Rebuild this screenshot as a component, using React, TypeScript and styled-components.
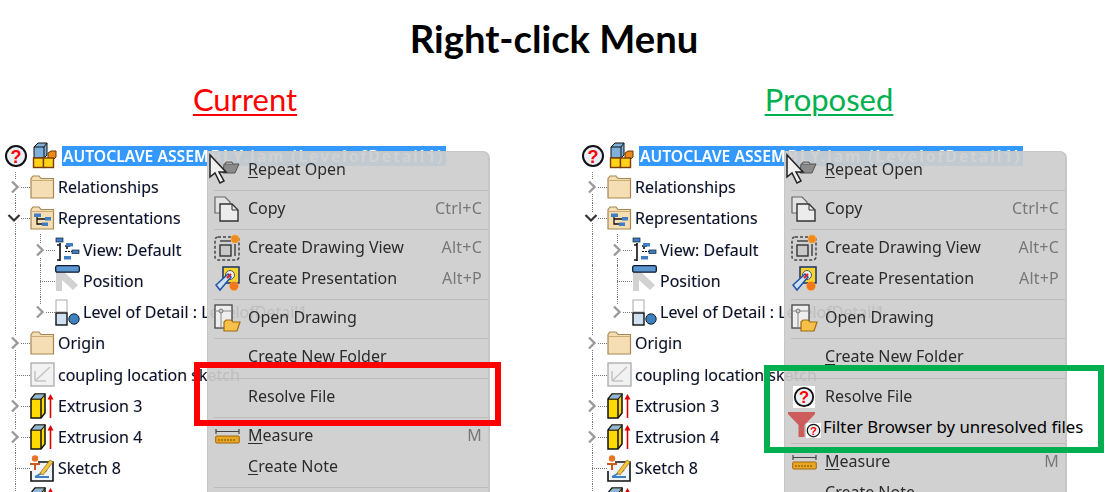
import React from "react";
import styled, { createGlobalStyle } from "styled-components";

const Global = createGlobalStyle`
  html, body { margin: 0; padding: 0; background: #fff; }
  #root { width: 1110px; height: 492px; }
`;

const Page = styled.div`
  width: 1110px;
  height: 492px;
  overflow: hidden;
  background: #fff;
  font-family: "Noto Sans", "Liberation Sans", sans-serif;
`;
const Title = styled.h1`
  margin: 0;
  height: 76px;
  text-align: center;
  padding-right: 2px;
  font: 700 38.2px/76px Lato, "Liberation Sans", sans-serif;
  color: #000;
`;
const Columns = styled.div`
  display: grid;
  grid-template-columns: 577px 533px;
`;
const Panel = styled.section`
  min-width: 0;
`;
const Heading = styled.h2<{ $color: string; $width: number }>`
  margin: 0 0 18px;
  width: ${(p) => p.$width}px;
  text-align: center;
  font: 400 31px/46px Lato, "Liberation Sans", sans-serif;
  color: ${(p) => p.$color};
  text-decoration: underline;
  text-decoration-thickness: 2px;
  text-underline-offset: 3px;
`;
const Snapshot = styled.div`
  position: relative;
  height: 352px;
`;
const Tree = styled.div`
  display: flex;
  flex-direction: column;
  width: 520px;
`;
const RootRow = styled.div`
  display: flex;
  align-items: center;
  height: 31.5px;
  padding-left: 4px;
`;
const Selected = styled.span`
  margin-left: 6px;
  background: #3399ff;
  color: #fff;
  font-weight: 600;
  font-size: 15.7px;
  line-height: 20px;
  padding: 0 1px;
  white-space: nowrap;
  filter: blur(0.35px);
`;
const SelectedTail = styled.span`
  font-weight: 700;
  letter-spacing: 1.9px;
`;
const TreeRow = styled.div`
  display: flex;
  align-items: center;
  height: 31.25px;
`;
const Guide = styled.span`
  flex: none;
  width: 25px;
  align-self: stretch;
  position: relative;
  &::before {
    content: "";
    position: absolute;
    left: 15px;
    top: 0;
    bottom: 0;
    border-left: 1px dotted #777;
  }
`;
const Twist = styled.span<{ $short?: boolean }>`
  flex: none;
  width: 30px;
  align-self: stretch;
  position: relative;
  display: flex;
  align-items: center;
  &::before {
    content: "";
    position: absolute;
    left: 15px;
    top: 0;
    bottom: ${(p) => (p.$short ? "50%" : "0")};
    border-left: 1px dotted #777;
  }
  &::after {
    content: "";
    position: absolute;
    left: 15px;
    width: 15px;
    top: 50%;
    border-top: 1px dotted #777;
  }
  svg {
    position: relative;
    z-index: 1;
    background: #fff;
  }
`;
const TreeIcon = styled.span`
  flex: none;
  width: 24px;
  margin-right: 4px;
  display: flex;
  justify-content: center;
  svg { display: block; overflow: visible; }
`;
const RootIcon = styled(TreeIcon)`
  margin-left: 4px;
  margin-right: 0;
`;
const Label = styled.span`
  font-size: 16px;
  color: #0a1228;
  white-space: nowrap;
  text-shadow: 0.6px 0 rgba(255, 150, 0, 0.25), -0.6px 0 rgba(0, 90, 255, 0.25);
  filter: blur(0.3px);
`;
const Menu = styled.div`
  position: absolute;
  left: 207px;
  top: 11px;
  width: 283px;
  height: 360px;
  box-sizing: border-box;
  padding-top: 2px;
  background: rgba(205, 205, 205, 0.92);
  border: 1px solid #c6c6c6;
  border-right-width: 2px;
  border-radius: 0 7px 0 0;
  display: flex;
  flex-direction: column;
`;
const Row = styled.div<{ $h: number }>`
  flex: none;
  height: ${(p) => p.$h}px;
  display: flex;
  align-items: center;
  position: relative;
  padding-left: 40px;
  padding-right: 6px;
  font-size: 16px;
  color: #2c2c2c;
  white-space: nowrap;
`;
const RowLabel = styled.span<{ $sharp?: boolean }>`
  flex: 1;
  margin-left: ${(p) => (p.$sharp ? "-2px" : "0")};
  margin-top: ${(p) => (p.$sharp ? "0" : "-2px")};
  font-size: ${(p) => (p.$sharp ? "16.8px" : "inherit")};
  color: ${(p) => (p.$sharp ? "#000" : "inherit")};
  filter: ${(p) => (p.$sharp ? "none" : "blur(0.35px)")};
  u { text-underline-offset: 2px; }
`;
const Shortcut = styled.span`
  color: #777;
  margin-top: -2px;
  letter-spacing: 0.2px;
  filter: blur(0.35px);
`;
const MenuIcon = styled.span`
  position: absolute;
  left: 5px;
  top: 50%;
  width: 28px;
  height: 28px;
  transform: translateY(-50%);
  display: flex;
  align-items: center;
  justify-content: center;
  svg { display: block; overflow: visible; }
`;
const CursorIcon = styled.span`
  display: block;
  margin-left: -5px;
  margin-top: -1px;
`;
const Sep = styled.div<{ $before?: number }>`
  flex: none;
  height: 1px;
  margin: ${(p) => p.$before ?? 5}px 0 2px 6px;
  background: #bcbcbc;
`;
const Callout = styled.div<{ $color: string; $l: number; $t: number; $w: number; $h: number }>`
  position: absolute;
  left: ${(p) => p.$l}px;
  top: ${(p) => p.$t}px;
  width: ${(p) => p.$w}px;
  height: ${(p) => p.$h}px;
  box-sizing: border-box;
  border: 6px solid ${(p) => p.$color};
`;
const IconStack = styled.span`
  position: relative;
  width: 27px;
  height: 25px;
  display: block;
  margin: -3px 0 0 -5px;
`;
const HelpOverlay = styled.span`
  position: absolute;
  left: 18px;
  top: 11px;
  display: flex;
`;
const ChevronWrap = styled.span<{ $open?: boolean }>`
  display: flex;
  margin-left: ${(p) => (p.$open ? "7px" : "10px")};
`;

/* ---------- icons ---------- */
const Help = ({ s = 24, paper }: { s?: number; paper?: boolean }) => (
  <svg width={s} height={s} viewBox="0 0 24 24">
    {paper && <rect width="24" height="24" fill="#fff" />}
    <circle cx="12" cy="12" r="10" fill="#e9eff7" stroke="#111" strokeWidth="2" />
    <text x="12" y="18.5" textAnchor="middle" fontFamily="Liberation Sans" fontWeight="700" fontSize="18" fill="#f00">?</text>
  </svg>
);
const Assembly = () => (
  <svg width="25" height="27" viewBox="0 0 25 27">
    <path d="M2 5 6 1h9v12l-3 3H2z" fill="#7fb0dc" stroke="#111" />
    <path d="M2 5h10v11M12 5l3-4" fill="none" stroke="#111" />
    <path d="M16 11l3-2h5v6l-3 3h-5z" fill="#e88a1c" stroke="#6b3300" />
    <rect x="1.500" y="16" width="10" height="9.500" fill="#ffd21a" stroke="#7a3c00" strokeWidth="1.4" />
    <rect x="11.500" y="16" width="10" height="9.500" fill="#ffd21a" stroke="#7a3c00" strokeWidth="1.4" />
  </svg>
);
const Folder = ({ children }: { children?: React.ReactNode }) => (
  <svg width="25" height="24" viewBox="0 0 25 24">
    <path d="M1 3.500 3 1h6l2 2.500h12.500V23H1z" fill="#f6deb4" stroke="#a68752" strokeWidth="1.2" />
    <path d="M1.500 5.500h22" stroke="#c9ab78" />
    {children}
  </svg>
);
const RepFolder = () => (
  <Folder>
    <path d="M7 11v7h5M7 13h8" stroke="#111" fill="none" strokeWidth="1.3" />
    <rect x="4" y="7.500" width="7" height="3.500" fill="#3d7fc0" />
    <rect x="15" y="11" width="6" height="3.500" fill="#3d7fc0" />
    <rect x="12" y="16.500" width="6" height="3.500" fill="#3d7fc0" />
  </Folder>
);
const ViewIco = () => (
  <svg width="25" height="26" viewBox="0 0 25 26">
    <path d="M5 6v18M5 8H2M5 23H2M10 9h5M12 9v3" stroke="#111" strokeWidth="1.6" fill="none" />
    <rect x="1" y="1" width="7" height="4" fill="#3d7fc0" stroke="#123" strokeWidth=".7" />
    <rect x="11" y="6" width="7" height="3.500" fill="#3d7fc0" />
    <rect x="17" y="13" width="7" height="3.500" fill="#3d7fc0" stroke="#123" strokeWidth=".7" />
    <rect x="9" y="19" width="7" height="3.500" fill="#3d7fc0" />
    <path d="M10 14.500h7" stroke="#111" strokeDasharray="2 1" />
  </svg>
);
const PositionIco = () => (
  <svg width="25" height="31" viewBox="0 0 25 31">
    <path d="M1 7v19h6V15l11 10 5-5L9 7z" fill="#d2d2d2" />
    <rect x=".7" y=".7" width="23.600" height="6.500" rx="1.500" fill="#5b97d2" stroke="#0c1a2c" strokeWidth="1.3" />
  </svg>
);
const Lod = () => (
  <svg width="25" height="27" viewBox="0 0 25 27">
    <rect x="1" y="1" width="11" height="12" fill="#fff" stroke="#aaa" />
    <rect x="1" y="14" width="11" height="12" fill="#cfe0f0" stroke="#111" strokeWidth="1.4" />
    <circle cx="19" cy="20" r="5.200" fill="#3f80bf" stroke="#123" />
  </svg>
);
const SketchGray = () => (
  <svg width="25" height="25" viewBox="0 0 25 25">
    <rect x="1" y="1" width="23" height="23" fill="#f2f2f2" stroke="#aaa" strokeWidth="1.3" />
    <path d="M5 19 20 5M5 19V9M5 19h11" stroke="#c4c4c4" strokeWidth="1.5" fill="none" />
  </svg>
);
const Extrusion = () => (
  <svg width="24" height="26" viewBox="0 0 24 26">
    <path d="M1 6 5 1h10v19l-4 5H1z" fill="#ffd900" stroke="#111" strokeWidth="1.500" />
    <path d="M11 6v19M1 6h10l4-5" stroke="#111" strokeWidth="1.500" fill="none" />
    <path d="M2 5.500 5.500 1.500H14.500L11 5.500z" fill="#8fb6d8" />
    <path d="M20.500 25V3" stroke="#e00000" strokeWidth="1.600" />
    <path d="M17.500 6.500 20.500 1l3 5.500z" fill="#e00000" />
  </svg>
);
const SketchEight = () => (
  <svg width="26" height="27" viewBox="0 0 26 27">
    <path d="M9 7h15v19H2V16" fill="#eef4fa" stroke="#111" strokeWidth="1.600" />
    <path d="M6 22 18 15M6 22h14" stroke="#3d7fc0" strokeWidth="2" fill="none" />
    <path d="M11 18 21 5l3 2-10 13z" fill="#f5c542" stroke="#9a6a00" strokeWidth=".7" />
    <circle cx="6" cy="3.500" r="3.200" fill="#e8742a" />
    <path d="M1 9h10M6 9v6" stroke="#d0581a" strokeWidth="2" />
  </svg>
);
const Chevron = ({ open }: { open?: boolean }) => (
  <ChevronWrap $open={open}>
    {open ? (
      <svg width="14" height="10" viewBox="0 0 14 10">
        <path d="M1.500 2 7 7.500 12.500 2" fill="none" stroke="#333" strokeWidth="2.200" />
      </svg>
    ) : (
      <svg width="10" height="14" viewBox="0 0 10 14">
        <path d="M2 1.500 7.500 7 2 12.500" fill="none" stroke="#9a9a9a" strokeWidth="2.400" />
      </svg>
    )}
  </ChevronWrap>
);
const RepeatIco = () => (
  <CursorIcon>
    <svg width="31" height="31" viewBox="0 0 31 31">
      <path d="M15 10h15l-4 9H14z" fill="#8b8b8b" stroke="#555" />
      <path d="M16 10l1-2h6l1 2" fill="#aaa" stroke="#555" />
      <path d="M1 1v22l5-4 5 10 4-2-5-9h7z" fill="#f0f0f0" stroke="#222" strokeWidth="1.500" />
    </svg>
  </CursorIcon>
);
const CopyIco = () => (
  <svg width="26" height="26" viewBox="0 0 26 26">
    <path d="M1 1h10l5 5v11H1z" fill="#e3e3e3" stroke="#666" strokeWidth="1.200" />
    <path d="M6 8h12l6 6v11H6z" fill="#ececec" stroke="#333" strokeWidth="1.400" />
    <path d="M18 8v6h6" fill="none" stroke="#333" />
  </svg>
);
const DrawingIco = () => (
  <svg width="26" height="27" viewBox="0 0 26 27">
    <rect x="1" y="3" width="24" height="23" rx="3" fill="none" stroke="#444" strokeWidth="1.500" strokeDasharray="3 2" />
    <path d="M6 7h11" stroke="#444" strokeWidth="1.500" />
    <rect x="6" y="11" width="11" height="11" fill="#c8c8c8" stroke="#333" strokeWidth="1.400" />
    <path d="M21 10v12" stroke="#444" strokeWidth="1.500" />
    <circle cx="21" cy="5" r="4" fill="#f08a1c" stroke="#ffb23a" strokeDasharray="1.500 1" />
  </svg>
);
const PresentIco = () => (
  <svg width="26" height="26" viewBox="0 0 26 26">
    <rect x="9" y="1" width="16" height="16" fill="#f5d630" stroke="#1b2f66" strokeWidth="1.500" />
    <circle cx="16" cy="9" r="4.500" fill="#eee" stroke="#555" />
    <path d="M2 19 14 8l3 3L6 24z" fill="#cfe0f0" stroke="#1f55a8" strokeWidth="1.500" />
    <path d="M13 12l4-4" stroke="#e02020" strokeWidth="2" />
    <circle cx="20" cy="20" r="4.500" fill="#f0781c" stroke="#ffb23a" strokeDasharray="1.500 1" />
  </svg>
);
const OpenDrawIco = () => (
  <svg width="27" height="28" viewBox="0 0 27 28">
    <rect x="1" y="1" width="17" height="23" fill="#eee" stroke="#444" strokeWidth="1.300" />
    <path d="M1 7h17M7 7v17" stroke="#888" />
    <circle cx="7" cy="7" r="2" fill="#ccc" stroke="#777" />
    <path d="M10 27V18l2-2h5l2 2h7l-3 9z" fill="#f6c04a" stroke="#a06c10" strokeWidth="1.200" />
  </svg>
);
const MeasureIco = () => (
  <svg width="25" height="16" viewBox="0 0 25 16">
    <path d="M1 1v5M24 1v5M1 3.500h23" stroke="#444" strokeWidth="1.200" fill="none" />
    <rect x=".7" y="8" width="23.600" height="7" rx="1" fill="#e7a723" stroke="#a5660a" />
    <path d="M4 11v2M7 11v2M10 11v2M13 11v2M16 11v2M19 11v2" stroke="#7a4a00" />
  </svg>
);
const FilterIco = () => (
  <svg width="27" height="25" viewBox="0 0 27 25">
    <path d="M0 0h27v2L16.500 13v12h-6V13L0 2z" fill="#cd5c5c" />
  </svg>
);

/* ---------- data ---------- */
type Node = { level: 0 | 1; twist?: "open" | "closed"; last?: boolean; icon: React.ReactNode; label: string };
const nodes: Node[] = [
  { level: 0, twist: "closed", icon: <Folder />, label: "Relationships" },
  { level: 0, twist: "open", icon: <RepFolder />, label: "Representations" },
  { level: 1, twist: "closed", icon: <ViewIco />, label: "View: Default" },
  { level: 1, icon: <PositionIco />, label: "Position" },
  { level: 1, twist: "closed", last: true, icon: <Lod />, label: "Level of Detail : LevelofDetail1" },
  { level: 0, twist: "closed", icon: <Folder />, label: "Origin" },
  { level: 0, icon: <SketchGray />, label: "coupling location sketch" },
  { level: 0, twist: "closed", icon: <Extrusion />, label: "Extrusion 3" },
  { level: 0, twist: "closed", icon: <Extrusion />, label: "Extrusion 4" },
  { level: 0, icon: <SketchEight />, label: "Sketch 8" },
  { level: 0, icon: <Extrusion />, label: "" },
];

const BrowserTree = () => (
  <Tree>
    <RootRow>
      <Help />
      <RootIcon><Assembly /></RootIcon>
      <Selected>AUTOCLAVE ASSE<SelectedTail>MBLY.iam (LevelofDetail1)</SelectedTail></Selected>
    </RootRow>
    {nodes.map((n, i) => (
      <TreeRow key={i}>
        {n.level === 1 && <Guide />}
        <Twist $short={n.last}>{n.twist && <Chevron open={n.twist === "open"} />}</Twist>
        <TreeIcon>{n.icon}</TreeIcon>
        <Label>{n.label}</Label>
      </TreeRow>
    ))}
  </Tree>
);

const Item = ({ icon, label, keys, sharp, h = 31 }: { icon?: React.ReactNode; label: React.ReactNode; keys?: string; sharp?: boolean; h?: number }) => (
  <Row $h={h}>
    {icon && <MenuIcon>{icon}</MenuIcon>}
    <RowLabel $sharp={sharp}>{label}</RowLabel>
    {keys && <Shortcut>{keys}</Shortcut>}
  </Row>
);

const ContextMenu = ({ proposed }: { proposed?: boolean }) => (
  <Menu>
    <Item icon={<RepeatIco />} label={<><u>R</u>epeat Open</>} />
    <Sep />
    <Item icon={<CopyIco />} label="Copy" keys="Ctrl+C" />
    <Sep />
    <Item icon={<DrawingIco />} label="Create Drawing View" keys="Alt+C" />
    <Item icon={<PresentIco />} label="Create Presentation" keys="Alt+P" />
    <Sep />
    <Item icon={<OpenDrawIco />} label="Open Drawing" />
    <Sep />
    <Item label={<><u>C</u>reate New Folder</>} />
    <Sep $before={6} />
    <Item icon={proposed ? <Help s={22} paper /> : undefined} label="Resolve File" />
    {proposed && (
      <Item
        sharp
        h={28}
        icon={
          <IconStack>
            <FilterIco />
            <HelpOverlay><Help s={15} paper /></HelpOverlay>
          </IconStack>
        }
        label="Filter Browser by unresolved files"
      />
    )}
    <Sep $before={proposed ? 3 : 5} />
    <Item icon={<MeasureIco />} label={<><u>M</u>easure</>} keys="M" />
    <Item label={<><u>C</u>reate Note</>} />
    <Sep />
  </Menu>
);

export default function App() {
  return (
    <Page>
      <Global />
      <Title>Right-click Menu</Title>
      <Columns>
        <Panel>
          <Heading $color="#ff0000" $width={490}>Current</Heading>
          <Snapshot>
            <BrowserTree />
            <ContextMenu />
            <Callout $color="#ff0000" $l={194} $t={222} $w={307} $h={64} />
          </Snapshot>
        </Panel>
        <Panel>
          <Heading $color="#00b050" $width={504}>Proposed</Heading>
          <Snapshot>
            <BrowserTree />
            <ContextMenu proposed />
            <Callout $color="#00b050" $l={187} $t={225} $w={340} $h={88} />
          </Snapshot>
        </Panel>
      </Columns>
    </Page>
  );
}
